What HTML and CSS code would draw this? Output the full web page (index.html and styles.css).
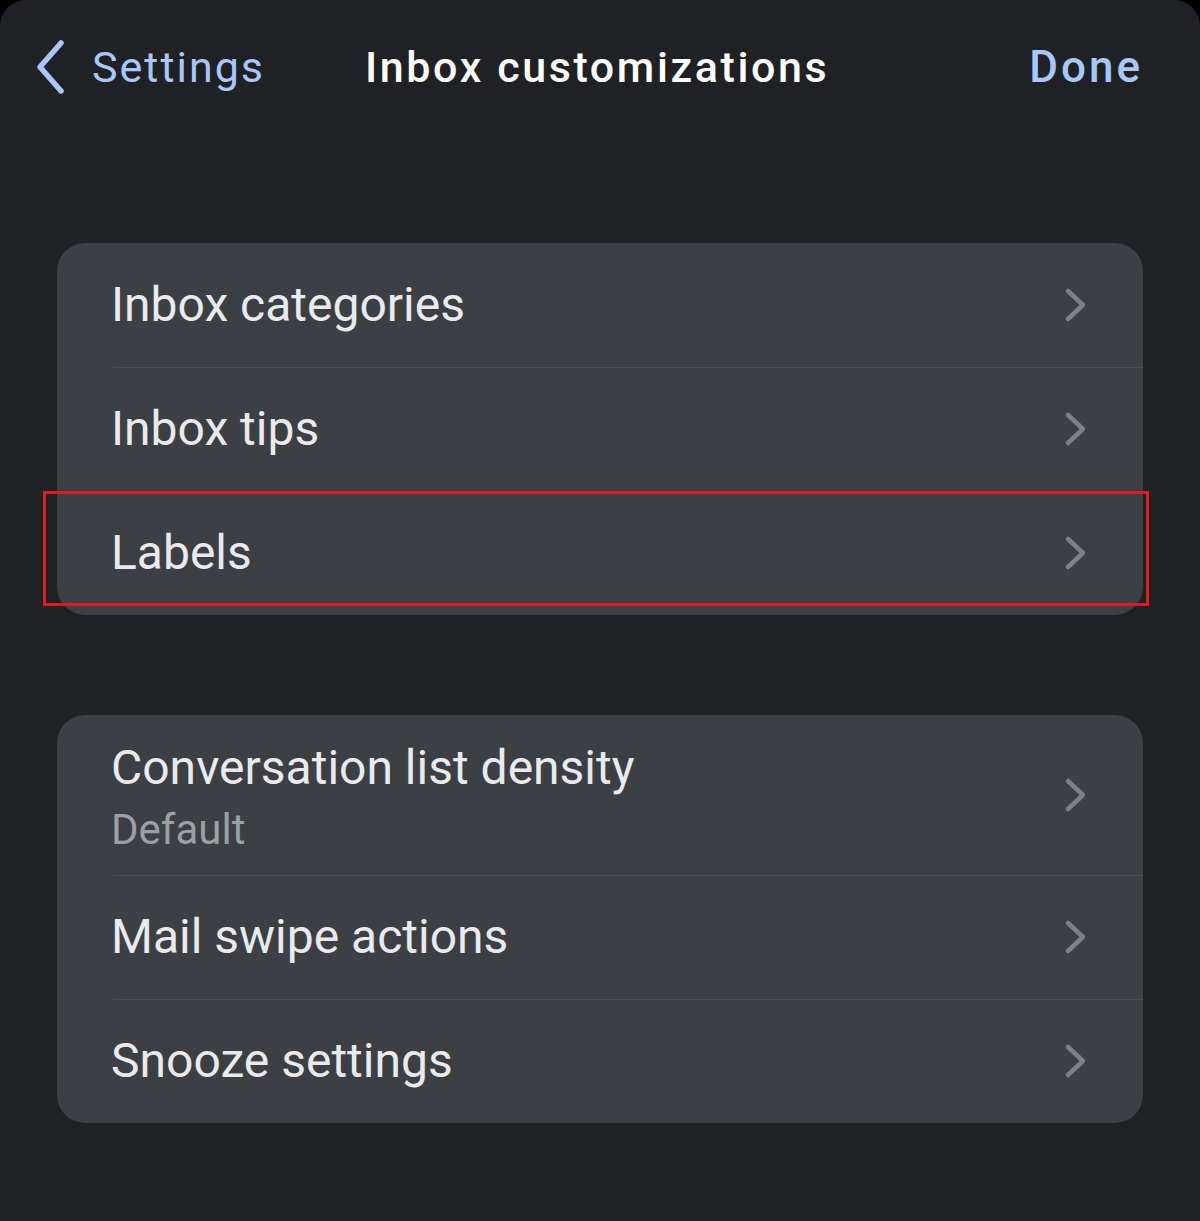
FILE: index.html
```html
<!DOCTYPE html>
<html lang="en">
<head>
<meta charset="utf-8">
<title>Inbox customizations</title>
<link rel="stylesheet" href="styles.css">
</head>
<body>
<div class="screen">
  <header class="topbar">
    <a class="back">
      <svg class="back-icon" viewBox="0 0 34 56" width="34" height="56"><path d="M27 4 L6 28 L27 52" fill="none" stroke="currentColor" stroke-width="5.5" stroke-linecap="round" stroke-linejoin="round"/></svg>
      <span>Settings</span>
    </a>
    <h1 class="title">Inbox customizations</h1>
    <a class="done">Done</a>
  </header>

  <main class="content">
    <section class="card">
      <div class="row">
        <div class="row-body"><div class="row-title">Inbox categories</div></div>
        <svg class="chev" viewBox="0 0 24 36" width="24" height="36"><path d="M4 4 L19 18 L4 32" fill="none" stroke="currentColor" stroke-width="4.5" stroke-linecap="round" stroke-linejoin="round"/></svg>
      </div>
      <div class="row">
        <div class="row-body"><div class="row-title">Inbox tips</div></div>
        <svg class="chev" viewBox="0 0 24 36" width="24" height="36"><path d="M4 4 L19 18 L4 32" fill="none" stroke="currentColor" stroke-width="4.5" stroke-linecap="round" stroke-linejoin="round"/></svg>
      </div>
      <div class="row row-highlight">
        <div class="row-body"><div class="row-title">Labels</div></div>
        <svg class="chev" viewBox="0 0 24 36" width="24" height="36"><path d="M4 4 L19 18 L4 32" fill="none" stroke="currentColor" stroke-width="4.5" stroke-linecap="round" stroke-linejoin="round"/></svg>
        <div class="highlight-box"></div>
      </div>
    </section>

    <section class="card">
      <div class="row row-tall">
        <div class="row-body">
          <div class="row-title">Conversation list density</div>
          <div class="row-sub">Default</div>
        </div>
        <svg class="chev" viewBox="0 0 24 36" width="24" height="36"><path d="M4 4 L19 18 L4 32" fill="none" stroke="currentColor" stroke-width="4.5" stroke-linecap="round" stroke-linejoin="round"/></svg>
      </div>
      <div class="row">
        <div class="row-body"><div class="row-title">Mail swipe actions</div></div>
        <svg class="chev" viewBox="0 0 24 36" width="24" height="36"><path d="M4 4 L19 18 L4 32" fill="none" stroke="currentColor" stroke-width="4.5" stroke-linecap="round" stroke-linejoin="round"/></svg>
      </div>
      <div class="row">
        <div class="row-body"><div class="row-title">Snooze settings</div></div>
        <svg class="chev" viewBox="0 0 24 36" width="24" height="36"><path d="M4 4 L19 18 L4 32" fill="none" stroke="currentColor" stroke-width="4.5" stroke-linecap="round" stroke-linejoin="round"/></svg>
      </div>
    </section>
  </main>
</div>
</body>
</html>
```

FILE: styles.css
```css
html, body {
  margin: 0;
  padding: 0;
  background: #000;
}

body {
  font-family: Roboto, "Noto Sans", "Liberation Sans", sans-serif;
  -webkit-font-smoothing: antialiased;
}

.screen {
  width: 1200px;
  height: 1221px;
  background: #202124;
  border-top-left-radius: 26px;
  border-top-right-radius: 26px;
  overflow: hidden;
}

.topbar {
  height: 134px;
  display: flex;
  align-items: center;
  justify-content: space-between;
  padding: 0 57px 0 34px;
  box-sizing: border-box;
  position: relative;
}

.back {
  display: flex;
  align-items: center;
  gap: 24px;
  color: #a8c7fa;
  font-size: 43px;
  letter-spacing: 2px;
}

.back-icon {
  display: block;
}

.title {
  margin: 0;
  font-size: 43px;
  font-weight: 500;
  color: #ffffff;
  position: absolute;
  left: 365px;
  top: 50%;
  transform: translateY(-50%);
  letter-spacing: 2.6px;
}

.done {
  color: #a8c7fa;
  font-size: 44px;
  font-weight: 500;
  letter-spacing: 3px;
}

.content {
  padding: 109px 57px 0 57px;
  display: flex;
  flex-direction: column;
  gap: 100px;
}

.card {
  background: #3c3f43;
  border-radius: 28px;
}

.row {
  position: relative;
  display: flex;
  align-items: center;
  height: 124px;
  padding: 0 55px 0 54px;
  box-sizing: border-box;
}

.row + .row::before {
  content: "";
  position: absolute;
  left: 56px;
  right: 0;
  top: 0;
  border-top: 1.5px solid #4a4d51;
}

.row-tall {
  height: 160px;
}

.row-body {
  flex: 1;
  min-width: 0;
}

.row-tall .row-body {
  padding-top: 8px;
}

.row-title {
  color: #e8eaed;
  font-size: 48px;
  line-height: 56px;
}

.row-tall .row-title {
  margin-top: -2px;
}

.row-sub {
  color: #9aa0a6;
  font-size: 42px;
  line-height: 52px;
  margin-top: 8px;
}

.chev {
  color: #7d8084;
  display: block;
  flex: none;
}

.highlight-box {
  position: absolute;
  left: -14px;
  top: 0;
  width: 1106px;
  height: 115px;
  box-sizing: border-box;
  border: 3px solid #e11a22;
  pointer-events: none;
}
```
